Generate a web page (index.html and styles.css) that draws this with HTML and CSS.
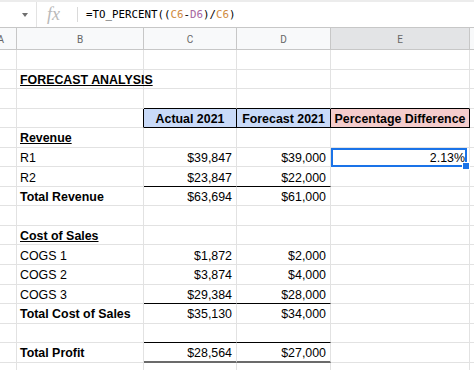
FILE: index.html
```html
<!DOCTYPE html>
<html>

<head>
    <meta name="viewport" content="width=device-width, initial-scale=1">
    <link rel="stylesheet" href="styles.css">
</head>

<body>
    <div class="fbar">
        <div class="namebox"><span class="caret"></span></div>
        <div class="fx"><span>fx</span></div>
        <div class="formula">=TO_PERCENT((<span class="ref1">C6</span>-<span class="ref2">D6</span>)/<span class="ref1">C6</span>)</div>
    </div>

    <div class="sheet">
        <div class="row colhead">
            <div class="c colA">A</div>
            <div class="c">B</div>
            <div class="c">C</div>
            <div class="c">D</div>
            <div class="c picked">E</div>
            <div class="c"></div>
        </div>

        <div class="row">
            <div class="c"></div><div class="c"></div><div class="c"></div><div class="c"></div><div class="c"></div><div class="c"></div>
        </div>
        <div class="row">
            <div class="c"></div><div class="c b u">FORECAST ANALYSIS</div><div class="c"></div><div class="c"></div><div class="c"></div><div class="c"></div>
        </div>
        <div class="row">
            <div class="c"></div><div class="c"></div><div class="c line"></div><div class="c line"></div><div class="c line"></div><div class="c"></div>
        </div>
        <div class="row">
            <div class="c"></div><div class="c rline"></div>
            <div class="c hd blue">Actual 2021</div>
            <div class="c hd blue">Forecast 2021</div>
            <div class="c hd pink">Percentage Difference</div>
            <div class="c"></div>
        </div>
        <div class="row">
            <div class="c"></div><div class="c b u">Revenue</div><div class="c"></div><div class="c"></div><div class="c"></div><div class="c"></div>
        </div>
        <div class="row">
            <div class="c"></div><div class="c">R1</div><div class="c num">$39,847</div><div class="c num">$39,000</div>
            <div class="c num selected">2.13%</div><div class="c"></div>
        </div>
        <div class="row">
            <div class="c"></div><div class="c">R2</div><div class="c num line">$23,847</div><div class="c num line">$22,000</div><div class="c"></div><div class="c"></div>
        </div>
        <div class="row">
            <div class="c"></div><div class="c b">Total Revenue</div><div class="c num">$63,694</div><div class="c num">$61,000</div><div class="c"></div><div class="c"></div>
        </div>
        <div class="row">
            <div class="c"></div><div class="c"></div><div class="c"></div><div class="c"></div><div class="c"></div><div class="c"></div>
        </div>
        <div class="row">
            <div class="c"></div><div class="c b u">Cost of Sales</div><div class="c"></div><div class="c"></div><div class="c"></div><div class="c"></div>
        </div>
        <div class="row">
            <div class="c"></div><div class="c">COGS 1</div><div class="c num">$1,872</div><div class="c num">$2,000</div><div class="c"></div><div class="c"></div>
        </div>
        <div class="row">
            <div class="c"></div><div class="c">COGS 2</div><div class="c num">$3,874</div><div class="c num">$4,000</div><div class="c"></div><div class="c"></div>
        </div>
        <div class="row">
            <div class="c"></div><div class="c">COGS 3</div><div class="c num line">$29,384</div><div class="c num line">$28,000</div><div class="c"></div><div class="c"></div>
        </div>
        <div class="row">
            <div class="c"></div><div class="c b">Total Cost of Sales</div><div class="c num">$35,130</div><div class="c num">$34,000</div><div class="c"></div><div class="c"></div>
        </div>
        <div class="row">
            <div class="c"></div><div class="c"></div><div class="c line"></div><div class="c line"></div><div class="c"></div><div class="c"></div>
        </div>
        <div class="row">
            <div class="c"></div><div class="c b">Total Profit</div><div class="c num dbl">$28,564</div><div class="c num dbl">$27,000</div><div class="c"></div><div class="c"></div>
        </div>
        <div class="row">
            <div class="c"></div><div class="c"></div><div class="c"></div><div class="c"></div><div class="c"></div><div class="c"></div>
        </div>
    </div>
</body>

</html>
```

FILE: styles.css
```css
* {
    box-sizing: border-box;
}

body {
    margin: 0;
    width: 474px;
    height: 370px;
    overflow: hidden;
    background-color: #fff;
    font-family: "Liberation Sans", Arial, sans-serif;
}

/* formula bar */
.fbar {
    display: flex;
    height: 28px;
    border-top: 2px solid #ececec;
    border-bottom: 1px solid #c7c7c7;
    align-items: center;
}

.namebox {
    width: 37px;
    height: 100%;
    display: flex;
    align-items: center;
    justify-content: flex-end;
    padding-right: 8px;
    border-right: 1px solid #e3e3e3;
}

.caret {
    width: 0;
    height: 0;
    border-left: 3px solid transparent;
    border-right: 3px solid transparent;
    border-top: 4px solid #6f6f6f;
}

.fx {
    width: 41px;
    height: 100%;
    display: flex;
    align-items: center;
}

.fx span {
    flex: 1;
    padding-left: 10px;
    font-family: "Liberation Serif", serif;
    font-style: italic;
    font-size: 18px;
    color: #b9b9b9;
    border-right: 1px solid #dadada;
    line-height: 15px;
}

.formula {
    padding-left: 8px;
    font-family: "DejaVu Sans Mono", monospace;
    font-size: 10.8px;
    color: #000;
}

.ref1 {
    color: #d08a3e;
}

.ref2 {
    color: #a8669f;
}

/* grid */
.row {
    display: grid;
    grid-template-columns: 17px 127px 93px 94px 139px 1fr;
    height: 19.55px;
}

.c {
    display: flex;
    align-items: center;
    padding: 2px 3px 0 3px;
    white-space: nowrap;
    font-size: 12.4px;
    color: #000;
    border-right: 1px solid #e2e2e2;
    border-bottom: 1px solid #e2e2e2;
}

.colhead {
    height: 22px;
    background-color: #f8f9fa;
}

.colhead .c {
    justify-content: center;
    padding-top: 1px;
    font-family: Roboto, sans-serif;
    font-size: 10px;
    color: #666;
    border-right-color: #c7c7c7;
    border-bottom-color: #c7c7c7;
}

.colhead .colA {
    justify-content: flex-end;
    padding-right: 12px;
    overflow: hidden;
}

.colhead .picked {
    background-color: #e3e4e6;
}

.b {
    font-weight: bold;
}

.u {
    text-decoration: underline;
}

.num {
    justify-content: flex-end;
    padding-right: 4px;
}

.line {
    border-bottom-color: #000;
}

.rline {
    border-right-color: #000;
}

.dbl {
    border-bottom: 2px solid #6b6b6b;
}

.hd {
    justify-content: center;
    font-weight: bold;
    border-right-color: #000;
    border-bottom-color: #000;
}

.blue {
    background-color: #c9daf8;
}

.pink {
    background-color: #f4cccc;
}

.selected {
    position: relative;
}

.selected::before {
    content: "";
    position: absolute;
    top: 0;
    left: 0;
    right: 2px;
    bottom: -1px;
    border: 2px solid #1a73e8;
}

.selected::after {
    content: "";
    position: absolute;
    right: -1px;
    bottom: -4px;
    width: 6px;
    height: 6px;
    background-color: #1a73e8;
    border: 1px solid #fff;
}
```
